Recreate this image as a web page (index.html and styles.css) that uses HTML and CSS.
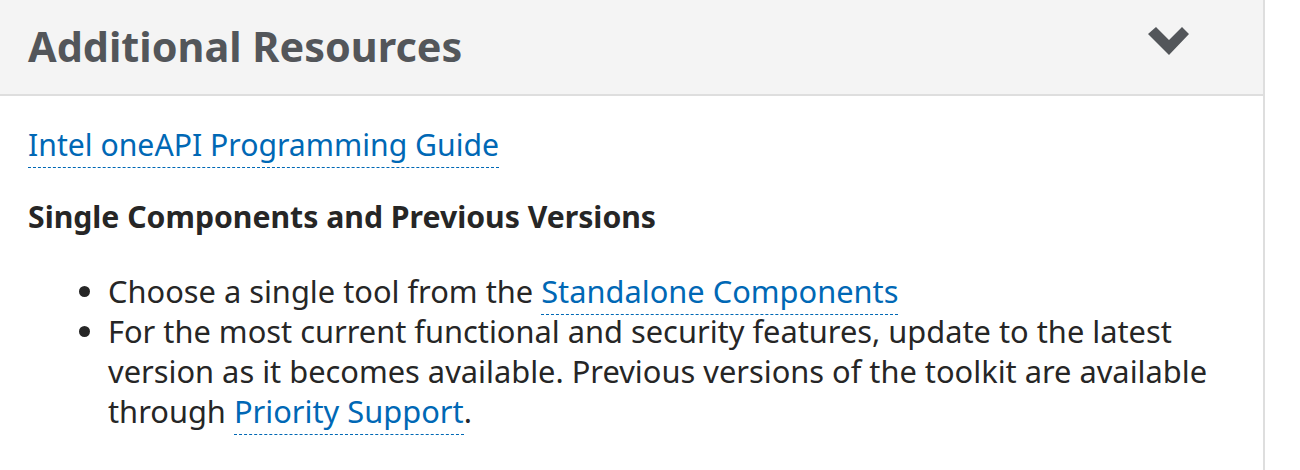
FILE: index.html
```html
<!DOCTYPE html>
<html>
<head>
<meta charset="utf-8">
<link rel="stylesheet" href="styles.css">
</head>
<body>
<div class="panel">
  <div class="panel-head">
    <h2 class="panel-title">Additional Resources</h2>
    <svg class="chev" width="42" height="30" viewBox="0 0 42 30"><polygon points="0,7 8,0 21,13 34,0 41,7 21,28" fill="#53565a"/></svg>
  </div>
  <div class="panel-body">
    <p class="first"><a href="#">Intel oneAPI Programming Guide</a></p>
    <h3 class="sub">Single Components and Previous Versions</h3>
    <ul class="list">
      <li>Choose a single tool from the <a href="#">Standalone Components</a></li>
      <li>For the most current functional and security features, update to the latest version as it becomes available. Previous versions of the toolkit are available through <a href="#">Priority Support</a>.</li>
    </ul>
  </div>
</div>
</body>
</html>
```
FILE: styles.css
```css
html, body { margin: 0; padding: 0; background: #fff; }
body { font-family: "Noto Sans", "Open Sans", sans-serif; color: #262626; }
.panel { width: 1263px; border-right: 2px solid #dedede; min-height: 470px; }
.panel-head {
  height: 94px; background: #f4f4f4; border-bottom: 2px solid #dedede;
  display: flex; align-items: center; justify-content: space-between;
  padding: 0 73px 0 28px; box-sizing: content-box;
}
.panel-title { margin: 0; font-size: 41.4px; font-weight: 700; color: #53565a; line-height: 1; }
.chev { display: block; margin-top: -10px; }
.panel-body { padding: 29px 28px 0 28px; }
.first { margin: 0; font-size: 30.2px; line-height: 40px; }
a { color: #0068b5; text-decoration: none; border-bottom: 1px dashed #0068b5; padding-bottom: 2px; }
.sub { margin: 32px 0 0; font-size: 30.2px; font-weight: 700; line-height: 40px; color: #262626; }
.list { margin: 34px 0 0; padding-left: 80px; font-size: 30.8px; line-height: 40px; }
.list li { margin: 0; }
```
